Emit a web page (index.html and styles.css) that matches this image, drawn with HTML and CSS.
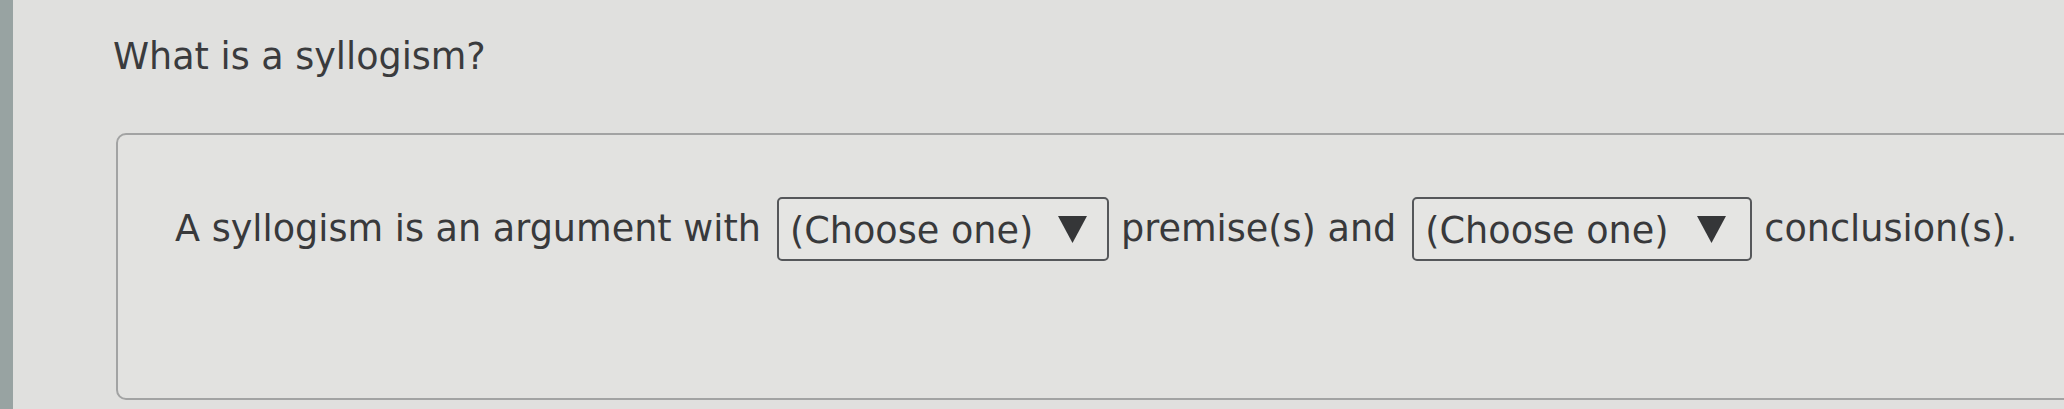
FILE: index.html
```html
<!DOCTYPE html>
<html>
<head>
<meta charset="utf-8">
<link rel="stylesheet" href="styles.css">
</head>
<body>
<div class="page">
  <div class="strip"></div>
  <div class="content">
    <h1 class="question">What is a syllogism?</h1>
    <div class="answer-box">
      <div class="sentence">
        <span>A syllogism is an argument with</span>
        <div class="select">
          <span class="select-label">(Choose one)</span>
          <svg class="arrow" width="29" height="27" viewBox="0 0 29 27"><polygon points="0,0 29,0 14.5,27" fill="#353638"/></svg>
        </div>
        <span>premise(s) and</span>
        <div class="select select-wide">
          <span class="select-label">(Choose one)</span>
          <svg class="arrow" width="29" height="27" viewBox="0 0 29 27"><polygon points="0,0 29,0 14.5,27" fill="#353638"/></svg>
        </div>
        <span>conclusion(s).</span>
      </div>
    </div>
  </div>
</div>
</body>
</html>
```

FILE: styles.css
```css
html, body {
  margin: 0;
  padding: 0;
  background: #e0e0de;
}
body {
  width: 2064px;
  height: 409px;
  overflow: hidden;
  font-family: "DejaVu Sans", Verdana, sans-serif;
  color: #38393b;
}
.page {
  display: flex;
  height: 409px;
}
.strip {
  width: 13px;
  flex: none;
  background: #98a3a2;
}
.content {
  flex: 1;
  min-width: 0;
  padding-top: 36px;
}
.question {
  margin: 0 0 0 100px;
  font-size: 36.5px;
  font-weight: normal;
  line-height: 42px;
  color: #3a3b3d;
}
.answer-box {
  margin: 55px -30px 0 103px;
  height: 267px;
  border: 2px solid #a2a3a3;
  border-radius: 10px;
  background: #e2e2e0;
  box-sizing: border-box;
  padding: 62px 0 0 57px;
}
.sentence {
  display: flex;
  align-items: center;
  gap: 12px;
  font-size: 36.6px;
  line-height: 42px;
  white-space: nowrap;
}
.select {
  display: flex;
  align-items: center;
  justify-content: space-between;
  box-sizing: border-box;
  width: 332px;
  height: 64px;
  margin-left: 4px;
  padding: 4px 20px 0 11px;
  border: 2px solid #55575a;
  border-radius: 5px;
  background: #e5e5e3;
}
.select-wide {
  width: 340px;
  padding-right: 24px;
}
.select-label {
  display: block;
}
.arrow {
  display: block;
  margin-top: -4px;
}
```
